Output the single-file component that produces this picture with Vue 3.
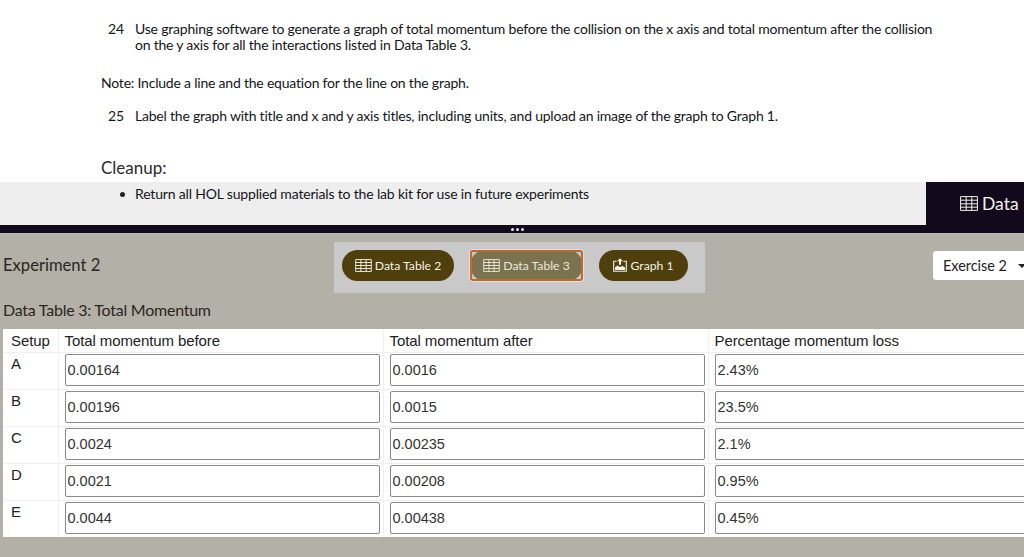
<script setup>
const steps = [
  { type: 'step', num: 24, lines: ['Use graphing software to generate a graph of total momentum before the collision on the x axis and total momentum after the collision', 'on the y axis for all the interactions listed in Data Table 3.'] },
  { type: 'note', text: 'Note: Include a line and the equation for the line on the graph.' },
  { type: 'step', num: 25, lines: ['Label the graph with title and x and y axis titles, including units, and upload an image of the graph to Graph 1.'] }
]

const tabs = [
  { label: 'Data Table 2', icon: 'table' },
  { label: 'Data Table 3', icon: 'table', active: true },
  { label: 'Graph 1', icon: 'graph' }
]

const rows = [
  { setup: 'A', before: '0.00164', after: '0.0016', loss: '2.43%' },
  { setup: 'B', before: '0.00196', after: '0.0015', loss: '23.5%' },
  { setup: 'C', before: '0.0024', after: '0.00235', loss: '2.1%' },
  { setup: 'D', before: '0.0021', after: '0.00208', loss: '0.95%' },
  { setup: 'E', before: '0.0044', after: '0.00438', loss: '0.45%' }
]
</script>

<template>
  <div class="page">
    <section class="content">
      <template v-for="step in steps" :key="step.num || 'note'">
        <p v-if="step.type === 'note'" class="note">{{ step.text }}</p>
        <div v-else class="step">
          <span class="step-num">{{ step.num }}</span>
          <div class="step-text">
            <div v-for="line in step.lines" :key="line">{{ line }}</div>
          </div>
        </div>
      </template>
      <h3 class="cleanup">Cleanup:</h3>
    </section>

    <div class="dock">
      <div class="dock-left">
        <div class="band">
          <span class="bullet"></span>
          <span>Return all HOL supplied materials to the lab kit for use in future experiments</span>
        </div>
        <div class="handle">
          <i></i><i></i><i></i>
        </div>
      </div>
      <div class="data-tab">
        <svg class="table-icon big" viewBox="0 0 18 15">
          <path d="M.6.6h16.8v13.8H.6zM.6 4.2h16.8M.6 7.8h16.8M.6 11.2h16.8M6.2.6v13.8M11.8.6v13.8" />
        </svg>
        <span>Data</span>
      </div>
    </div>

    <section class="panel">
      <div class="panel-head">
        <div class="exp-title">Experiment 2</div>
        <div class="tabs">
          <button v-for="tab in tabs" :key="tab.label" class="pill" :class="{ active: tab.active }">
            <svg v-if="tab.icon === 'table'" class="table-icon" viewBox="0 0 18 14">
              <path d="M.6.6h16.8v12.8H.6zM.6 3.8h16.8M.6 7h16.8M.6 10.2h16.8M6.2.6v12.8M11.8.6v12.8" />
            </svg>
            <svg v-else class="graph-icon" viewBox="0 0 14 14">
              <path class="frame" d="M3.6 3.2H.7v10h12.6v-10h-2.9" />
              <path class="fill" d="M7 .2l3 3H8v3.6H6V3.2H4zM2 12v-2.6l2.4-2 2.4 1.6 2.6-1 2.6 1.4V12z" />
            </svg>
            <span>{{ tab.label }}</span>
          </button>
        </div>
        <div class="exercise">
          <span>Exercise 2</span>
          <span class="caret"></span>
        </div>
      </div>

      <h4 class="table-title">Data Table 3: Total Momentum</h4>

      <table class="momentum">
        <thead>
          <tr>
            <th class="col-setup">Setup</th>
            <th class="col-val">Total momentum before</th>
            <th class="col-val">Total momentum after</th>
            <th class="col-val">Percentage momentum loss</th>
          </tr>
        </thead>
        <tbody>
          <tr v-for="row in rows" :key="row.setup">
            <td class="setup">{{ row.setup }}</td>
            <td><input :value="row.before" readonly /></td>
            <td><input :value="row.after" readonly /></td>
            <td><input :value="row.loss" readonly /></td>
          </tr>
        </tbody>
      </table>
    </section>
  </div>
</template>

<style>
html, body {
  margin: 0;
  background: #b3b0a8;
}
</style>

<style scoped>
.page {
  width: 1024px;
  height: 557px;
  overflow: hidden;
  font-family: Lato, "Liberation Sans", sans-serif;
  background: #fff;
}

.content {
  height: 182px;
  box-sizing: border-box;
  padding: 21px 0 0 101px;
  font-size: 14px;
  line-height: 16px;
  color: #15151a;
  letter-spacing: -0.21px;
}

.step {
  display: flex;
}

.step-num {
  width: 34px;
  padding-left: 7px;
  box-sizing: border-box;
  flex-shrink: 0;
}

.note {
  margin: 22px 0 17px;
}

.cleanup {
  margin: 33px 0 0;
  font-size: 17px;
  line-height: 22px;
  font-weight: 400;
  letter-spacing: 0;
  color: #2b2b30;
}

.dock {
  display: flex;
  height: 51px;
}

.dock-left {
  width: 926px;
  display: flex;
  flex-direction: column;
}

.band {
  height: 43px;
  box-sizing: border-box;
  background: #eeeeee;
  display: flex;
  padding: 4px 0 0 120px;
  font-size: 14px;
  line-height: 16px;
  letter-spacing: -0.17px;
  color: #15151a;
}

.bullet {
  width: 5px;
  height: 5px;
  border-radius: 50%;
  background: #222;
  margin: 6px 10px 0 0;
}

.handle {
  height: 8px;
  background: #120a1c;
  display: flex;
  align-items: center;
  gap: 2px;
  padding-left: 511px;
}

.handle i {
  width: 3px;
  height: 3px;
  border-radius: 50%;
  background: #e8e8e8;
}

.data-tab {
  flex: 1;
  background: #120a1c;
  color: #f4f1e6;
  display: flex;
  align-items: center;
  gap: 4px;
  padding: 0 0 8px 34px;
  font-size: 17.5px;
}

.table-icon {
  width: 17px;
  height: 13px;
  flex-shrink: 0;
}

.table-icon.big {
  width: 18px;
  height: 15px;
}

.table-icon path {
  fill: none;
  stroke: currentColor;
  stroke-width: 1;
}

.panel {
  height: 324px;
  background: #b3b0a8;
  border-top: 1px solid #bdbab3;
  box-sizing: border-box;
  color: #2a261c;
}

.panel-head {
  display: flex;
  align-items: flex-start;
  height: 66px;
  padding-top: 8px;
  box-sizing: border-box;
}

.exp-title {
  width: 334px;
  flex-shrink: 0;
  padding: 13px 0 0 3px;
  box-sizing: border-box;
  font-size: 16.6px;
  line-height: 20px;
}

.tabs {
  width: 371px;
  height: 51px;
  background: #c9c9c9;
  box-sizing: border-box;
  padding: 8px 0 0 8px;
  display: flex;
  flex-shrink: 0;
}

.pill {
  position: relative;
  height: 31px;
  width: 112px;
  padding: 0;
  border: 0;
  border-radius: 16px;
  background: #4e3f0c;
  color: #f4f1e6;
  font: inherit;
  font-size: 12.2px;
  display: flex;
  align-items: center;
  justify-content: center;
  gap: 3px;
  margin-right: 16px;
}

.pill:last-child {
  width: 89px;
  margin-right: 0;
}

.pill.active {
  width: 113px;
  background: #7b7350;
  color: #e9e6da;
}

.pill.active::after {
  content: "";
  position: absolute;
  inset: 0;
  border: 2px solid #bf6a28;
  border-radius: 3px;
  box-shadow: 0 0 0 1px #dedede;
}

.graph-icon {
  width: 14px;
  height: 14px;
  margin-top: -2px;
}

.graph-icon .frame {
  fill: none;
  stroke: currentColor;
  stroke-width: 1.1;
}

.graph-icon .fill {
  fill: currentColor;
}

.exercise {
  width: 100px;
  height: 29px;
  margin: 9px 0 0 228px;
  flex-shrink: 0;
  background: #fff;
  border-radius: 3px;
  color: #222;
  font-size: 14.4px;
  line-height: 29px;
  padding-left: 10px;
  box-sizing: border-box;
  display: flex;
  align-items: center;
}

.caret {
  width: 0;
  height: 0;
  margin-left: 11px;
  border-left: 4px solid transparent;
  border-right: 4px solid transparent;
  border-top: 4px solid #222;
}

.table-title {
  margin: 0;
  padding-left: 3px;
  font-size: 16px;
  line-height: 20px;
  font-weight: 400;
  letter-spacing: -0.25px;
  color: #2a261c;
}

.momentum {
  margin: 9px 0 0 3px;
  width: 1030px;
  background: #fff;
  border-collapse: collapse;
  table-layout: fixed;
  font-family: "Liberation Sans", Arial, sans-serif;
  font-size: 15px;
  color: #222;
}

.momentum th {
  font-weight: 400;
  text-align: left;
  height: 23px;
  padding: 1px 0 0 6px;
  box-sizing: border-box;
  letter-spacing: -0.1px;
}

.col-setup {
  width: 55px;
  padding-left: 8px !important;
}

.col-val {
  width: 325px;
}

.momentum td {
  height: 37px;
  padding: 0 0 0 6px;
  box-sizing: border-box;
  border-top: 1px solid #f0f0f0;
  vertical-align: top;
}

.momentum td + td {
  border-left: 1px solid #f0f0f0;
}

.momentum th + th {
  border-left: 1px solid #f0f0f0;
}

td.setup {
  padding: 3px 0 0 8px;
  line-height: 16px;
}

.momentum input {
  display: block;
  width: 315px;
  height: 32px;
  margin-top: 1px;
  padding: 0 2px;
  box-sizing: border-box;
  border: 1px solid #8a8a8a;
  border-radius: 2px;
  background: #fff;
  font: inherit;
  font-size: 14.5px;
  color: #333;
  outline: none;
}
</style>
